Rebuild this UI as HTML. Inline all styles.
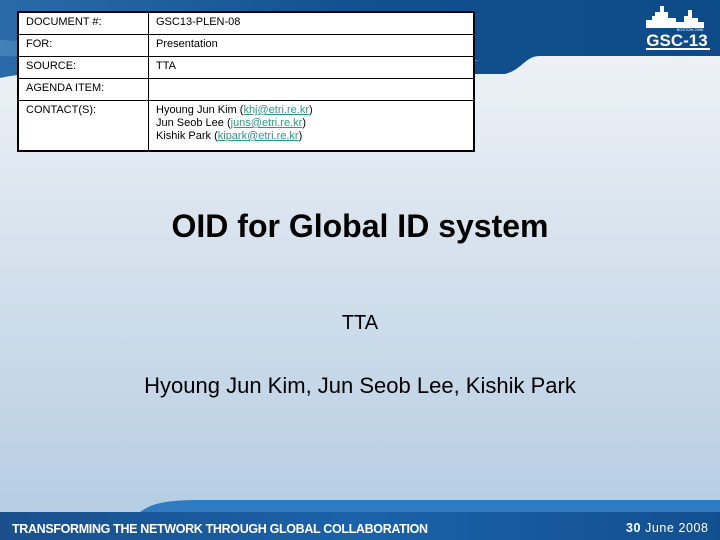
<!DOCTYPE html>
<html><head><meta charset="utf-8"><style>
body{margin:0;width:720px;height:540px;overflow:hidden;position:relative;font-family:"Liberation Sans",sans-serif;background:#dde7f0}
svg.bg{position:absolute;left:0;top:0}
table{position:absolute;left:17px;top:11px;width:458px;border-collapse:collapse;background:#fff;border:2px solid #000;font-size:11px;color:#000}
td{border:1px solid #000;padding:3px 5px 3px 7px;height:15px;vertical-align:top;line-height:13px}
td.l{width:117px}
a{color:#2a9a8a;text-decoration:underline}
.t{position:absolute;width:720px;text-align:center;color:#000;line-height:1}
</style></head><body>
<svg class="bg" width="720" height="540">
<defs>
<linearGradient id="body" x1="0" y1="0" x2="0" y2="1"><stop offset="0" stop-color="#f4f6f9"/><stop offset="0.5" stop-color="#d3e0ec"/><stop offset="1" stop-color="#b3cbe2"/></linearGradient>
<linearGradient id="top" x1="0" y1="0" x2="1" y2="0"><stop offset="0" stop-color="#2a6aa8"/><stop offset="0.5" stop-color="#11518f"/><stop offset="1" stop-color="#0e4a88"/></linearGradient>
<linearGradient id="foot" x1="0" y1="0" x2="1" y2="0"><stop offset="0" stop-color="#1a4f8c"/><stop offset="0.5" stop-color="#1b62a8"/><stop offset="1" stop-color="#124f90"/></linearGradient>
</defs>
<rect width="720" height="540" fill="url(#body)"/>
<path d="M0 0H720V56H540C525 56 522 70 505 74H40C20 74 10 76 0 78Z" fill="url(#top)"/>
<path d="M0 40C100 45 300 50 480 60L470 64C300 60 100 58 0 56Z" fill="#5a95cc" opacity="0.5"/>
<path d="M0 512H720V540H0Z" fill="url(#foot)"/>
<path d="M140 512C150 505 160 500 200 500H720V512Z" fill="#2f7bc2"/>
<g fill="#fff">
<path d="M646 28V20H652V16H655V12H660V6H664V12H668V18H676V22H684V16H688V10H692V18H698V22H704V28Z"/>
<rect x="646" y="48" width="64" height="2"/>
</g>
<text x="677" y="46" font-family="Liberation Sans" font-weight="bold" font-size="17" fill="#fff" text-anchor="middle">GSC-13</text>
<text x="690" y="31" font-family="Liberation Sans" font-size="4" fill="#fff" text-anchor="middle">BOSTON 2008</text>
<text x="12" y="533" font-family="Liberation Sans" font-weight="bold" font-size="12.5" fill="#fff" textLength="416">TRANSFORMING THE NETWORK THROUGH GLOBAL COLLABORATION</text>
<text x="626" y="532" font-family="Liberation Sans" font-size="12.5" fill="#fff" textLength="82"><tspan font-weight="bold">30</tspan> June 2008</text>
</svg>
<table>
<tr><td class="l">DOCUMENT #:</td><td>GSC13-PLEN-08</td></tr>
<tr><td class="l">FOR:</td><td>Presentation</td></tr>
<tr><td class="l">SOURCE:</td><td>TTA</td></tr>
<tr><td class="l">AGENDA ITEM:</td><td></td></tr>
<tr><td class="l" style="height:43px">CONTACT(S):</td><td>Hyoung Jun Kim (<a>khj@etri.re.kr</a>)<br>Jun Seob Lee (<a>juns@etri.re.kr</a>)<br>Kishik Park (<a>kipark@etri.re.kr</a>)</td></tr>
</table>
<div class="t" style="top:210px;font-size:32px;font-weight:bold">OID for Global ID system</div>
<div class="t" style="top:313px;font-size:20px">TTA</div>
<div class="t" style="top:375px;font-size:22px">Hyoung Jun Kim, Jun Seob Lee, Kishik Park</div>
</body></html>
